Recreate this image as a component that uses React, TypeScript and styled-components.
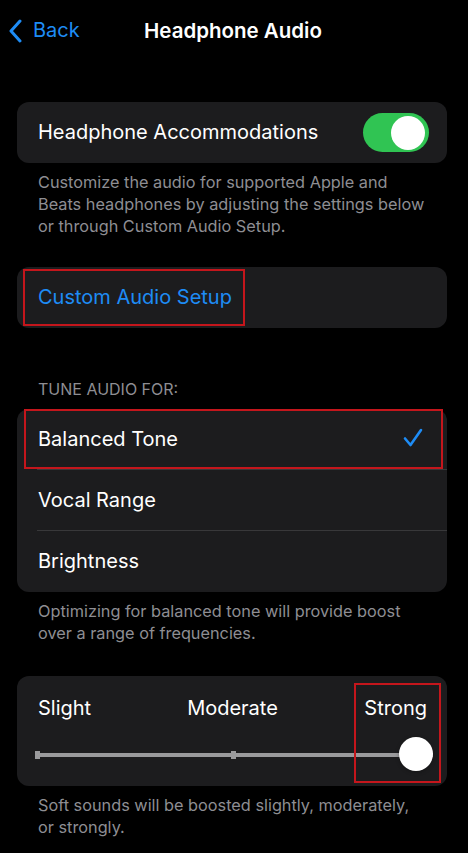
import React from "react";
import styled, { createGlobalStyle } from "styled-components";

const GlobalStyle = createGlobalStyle`
  html, body {
    margin: 0;
    padding: 0;
    background: #000;
  }
  body {
    font-family: Inter, "Liberation Sans", sans-serif;
    -webkit-font-smoothing: antialiased;
  }
`;

const BLUE = "#1e8cf5";
const GRAY = "#8e8e93";

export default function App() {
  return (
    <Page>
      <GlobalStyle />
      <NavBar>
        <BackButton>
          <svg width="14" height="24" viewBox="0 0 14 24">
            <path d="M12 2 L3 12 L12 22" fill="none" stroke={BLUE} strokeWidth="3" strokeLinecap="round" strokeLinejoin="round" />
          </svg>
          <span>Back</span>
        </BackButton>
        <NavTitle>Headphone Audio</NavTitle>
        <span />
      </NavBar>

      <Card $top={42}>
        <Row>
          <RowLabel>Headphone Accommodations</RowLabel>
          <Toggle><Knob /></Toggle>
        </Row>
      </Card>
      <Footer>
        Customize the audio for supported Apple and<br />
        Beats headphones by adjusting the settings below<br />
        or through Custom Audio Setup.
      </Footer>

      <Card $top={30}>
        <Row>
          <RowLabel $blue>Custom Audio Setup</RowLabel>
        </Row>
        <Highlight style={{ left: 6, top: 2, width: 222, height: 57 }} />
      </Card>

      <SectionHeader>TUNE AUDIO FOR:</SectionHeader>
      <Card $top={0}>
        <Row $divider>
          <RowLabel>Balanced Tone</RowLabel>
          <Check width="20" height="19" viewBox="0 0 20 19">
            <path d="M2 10.5 L7.5 17 L18 2" fill="none" stroke={BLUE} strokeWidth="2.6" strokeLinecap="round" strokeLinejoin="round" />
          </Check>
        </Row>
        <Row $divider>
          <RowLabel>Vocal Range</RowLabel>
        </Row>
        <Row>
          <RowLabel>Brightness</RowLabel>
        </Row>
        <Highlight style={{ left: 7, top: 0, width: 419, height: 60 }} />
      </Card>
      <Footer>
        Optimizing for balanced tone will provide boost<br />
        over a range of frequencies.
      </Footer>

      <Card $top={32}>
        <SliderBlock>
          <Labels>
            <RowLabel>Slight</RowLabel>
            <RowLabel>Moderate</RowLabel>
            <RowLabel>Strong</RowLabel>
          </Labels>
          <Track>
            <Tick $pos={0} />
            <Tick $pos={50} />
            <Thumb />
          </Track>
        </SliderBlock>
        <Highlight style={{ left: 337, top: 7, width: 87, height: 100 }} />
      </Card>
      <Footer $bottom={20}>
        Soft sounds will be boosted slightly, moderately,<br />
        or strongly.
      </Footer>
    </Page>
  );
}

const Page = styled.div`
  width: 468px;
  padding: 0 21px 0 17px;
  box-sizing: border-box;
  color: #fff;
`;

const NavBar = styled.div`
  height: 60px;
  display: grid;
  grid-template-columns: 1fr auto 1fr;
  align-items: center;
  margin: 0 -21px 0 -17px;
  padding: 0 8px;
`;

const BackButton = styled.div`
  display: flex;
  align-items: center;
  gap: 11px;
  color: ${BLUE};
  font-size: 20px;
  svg {
    margin-top: 1px;
  }
`;

const NavTitle = styled.div`
  font-size: 20.5px;
  font-weight: 600;
  color: #fff;
  margin-right: 2px;
`;

const Card = styled.div<{ $top: number }>`
  position: relative;
  margin-top: ${(p) => p.$top}px;
  background: #1c1c1e;
  border-radius: 12px;
`;

const Row = styled.div<{ $divider?: boolean }>`
  position: relative;
  height: 61px;
  display: flex;
  align-items: center;
  justify-content: space-between;
  padding: 0 24px 2px 21px;
  box-sizing: border-box;
  &::after {
    content: "";
    display: ${(p) => (p.$divider ? "block" : "none")};
    position: absolute;
    left: 20px;
    right: 0;
    bottom: 0;
    height: 1px;
    background: #38383a;
  }
`;

const RowLabel = styled.span<{ $blue?: boolean }>`
  font-size: 20px;
  color: ${(p) => (p.$blue ? BLUE : "#fff")};
`;

const Check = styled.svg`
  margin-top: -2px;
`;

const Toggle = styled.div`
  width: 66px;
  height: 39px;
  border-radius: 20px;
  background: #30c453;
  display: flex;
  align-items: center;
  justify-content: flex-end;
  padding: 0 4px;
  box-sizing: border-box;
  margin: 2px -6px 0 0;
`;

const Knob = styled.div`
  width: 34px;
  height: 34px;
  border-radius: 50%;
  background: #fff;
`;

const Footer = styled.p<{ $bottom?: number }>`
  margin: 0 0 ${(p) => p.$bottom ?? 0}px;
  padding: 8px 0 0 21px;
  font-size: 16.3px;
  line-height: 22px;
  white-space: nowrap;
  color: ${GRAY};
`;

const SectionHeader = styled.div`
  margin: 51px 0 10px;
  padding-left: 21px;
  font-size: 16px;
  line-height: 20px;
  color: ${GRAY};
`;

const Highlight = styled.div`
  position: absolute;
  border: 2px solid #c4161c;
  box-sizing: border-box;
  pointer-events: none;
`;

const SliderBlock = styled.div`
  height: 110px;
  padding: 20px 20px 0 18px;
  box-sizing: border-box;
`;

const Labels = styled.div`
  display: grid;
  grid-template-columns: 1fr auto 1fr;
  padding: 0 0 0 3px;
  > span:last-child {
    justify-self: end;
  }
`;

const Track = styled.div`
  position: relative;
  margin: 33px -6px 0 0;
  height: 4px;
  background: #9a9a9c;
`;

const Tick = styled.div<{ $pos: number }>`
  position: absolute;
  top: -2px;
  left: calc(${(p) => p.$pos}% - ${(p) => (p.$pos ? 3 : 0)}px);
  width: 5px;
  height: 8px;
  background: #9a9a9c;
`;

const Thumb = styled.div`
  position: absolute;
  right: 0;
  top: -16px;
  width: 34px;
  height: 34px;
  border-radius: 50%;
  background: #fff;
  box-shadow: 0 1px 4px rgba(0, 0, 0, 0.3);
`;
